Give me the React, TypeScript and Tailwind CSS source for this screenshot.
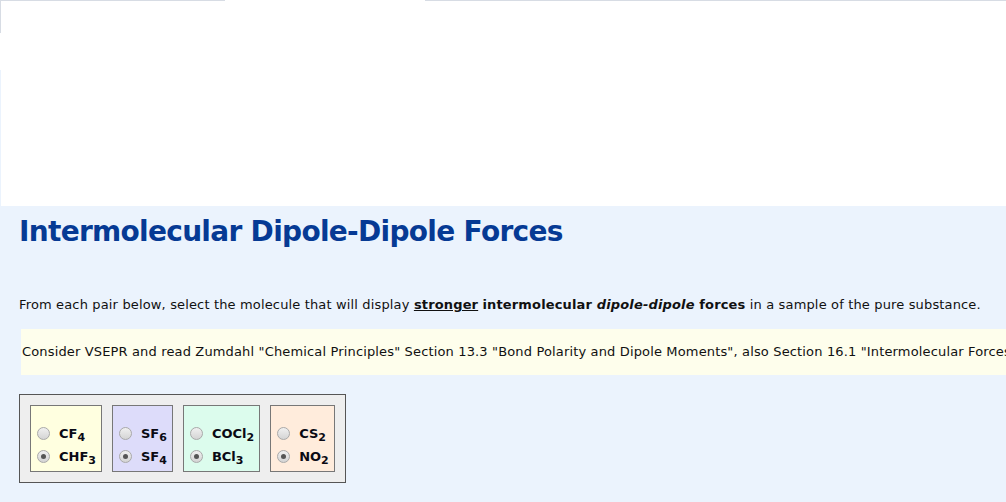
import React from 'react';

type Pair = {
  bg: string;
  first: React.ReactNode;
  second: React.ReactNode;
};

const sub = (n: string): JSX.Element => (
  <sub className="relative top-[3px] align-baseline text-[11px]">{n}</sub>
);

const pairs: Pair[] = [
  { bg: 'bg-[#ffffe0]', first: <>CF{sub('4')}</>, second: <>CHF{sub('3')}</> },
  { bg: 'bg-[#dddcfa]', first: <>SF{sub('6')}</>, second: <>SF{sub('4')}</> },
  { bg: 'bg-[#dcfced]', first: <>COCl{sub('2')}</>, second: <>BCl{sub('3')}</> },
  { bg: 'bg-[#ffecdc]', first: <>CS{sub('2')}</>, second: <>NO{sub('2')}</> },
];

function Radio({ checked }: { readonly checked: boolean }): JSX.Element {
  return (
    <span className="flex h-[13px] w-[13px] shrink-0 items-center justify-center rounded-full border border-[#a9a9a9] bg-gradient-to-b from-[#f0f0f0] to-[#d4d4d4]">
      {checked && <span className="h-[5px] w-[5px] rounded-full bg-[#555]" />}
    </span>
  );
}

function PairBox({
  pair,
  index,
}: {
  readonly pair: Pair;
  readonly index: number;
}): JSX.Element {
  const [picked, setPicked] = React.useState(1);
  return (
    <div
      className={`${pair.bg} flex flex-col border border-[#777] pl-[6px] pr-[5px] pt-[16px] pb-[3px]`}
    >
      {[pair.first, pair.second].map((label, i) => (
        <label
          key={i}
          className="flex h-[23px] cursor-pointer items-center gap-[9px] text-[13px] font-bold leading-none text-[#0a0a14]"
          onClick={(): void => setPicked(i)}
        >
          <input
            type="radio"
            name={`pair-${index}`}
            className="sr-only"
            checked={picked === i}
            onChange={(): void => setPicked(i)}
          />
          <Radio checked={picked === i} />
          <span>{label}</span>
        </label>
      ))}
    </div>
  );
}

export default function App(): JSX.Element {
  return (
    <div className="h-[502px] w-[1006px] overflow-hidden bg-[#ebf3fd] font-['DejaVu_Sans',Verdana,sans-serif] text-[#111]">
      <div className="flex h-[206px] flex-col bg-white">
        <div className="flex h-px">
          <div className="w-[225px] bg-[#d7dce4]" />
          <div className="flex-1" />
          <div className="w-[581px] bg-[#d7dce4]" />
        </div>
        <div className="flex flex-1">
          <div className="flex w-px flex-col">
            <div className="h-[32px] bg-[#d7dce4]" />
            <div className="h-[37px]" />
            <div className="flex-1 bg-[#ebf3fd]" />
          </div>
          <div className="flex-1" />
        </div>
      </div>

      <h1 className="pl-[19px] pt-[8px] text-[28px] font-bold leading-[36px] tracking-[-0.7px] text-[#063a94]">
        Intermolecular Dipole-Dipole Forces
      </h1>

      <p className="pl-[19px] pt-[47px] text-[13px] leading-[16px] tracking-[0.15px]">
        From each pair below, select the molecule that will display{' '}
        <b>
          <u>stronger</u>
        </b>{' '}
        <b>
          intermolecular <i>dipole-dipole</i> forces
        </b>{' '}
        in a sample of the pure substance.
      </p>

      <div className="ml-[21px] mt-[16px] flex h-[46px] items-center whitespace-nowrap bg-[#fefeec] pl-px text-[13px] tracking-[0.15px]">
        Consider VSEPR and read Zumdahl "Chemical Principles" Section 13.3
        "Bond Polarity and Dipole Moments", also Section 16.1 "Intermolecular
        Forces".
      </div>

      <div className="ml-[19px] mt-[19px] inline-flex gap-[10px] border border-[#555] bg-[#eeeeee] p-[10px]">
        {pairs.map((pair, index) => (
          <PairBox key={index} pair={pair} index={index} />
        ))}
      </div>
    </div>
  );
}
